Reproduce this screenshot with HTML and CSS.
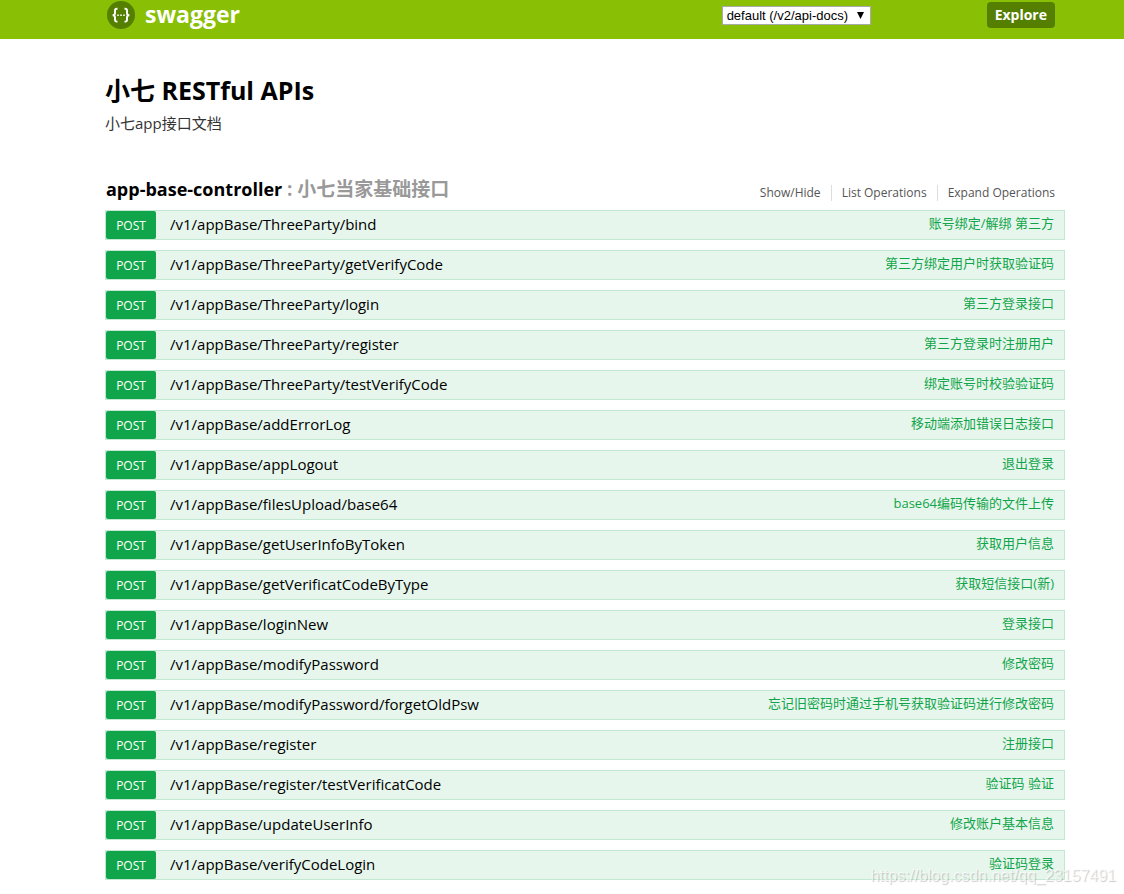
FILE: index.html
```html
<!DOCTYPE html>
<html lang="zh-CN">
<head>
    <meta charset="UTF-8">
    <meta name="viewport" content="width=device-width, initial-scale=1.0">
    <title>Swagger UI</title>
    <link rel="stylesheet" href="styles.css">
</head>
<body>
    <header class="header">
        <a href="#" class="logo">
            <svg class="logo-icon" viewBox="0 0 28 28" aria-hidden="true">
                <circle cx="14" cy="14" r="14" fill="#547f00"/>
                <path d="M10.500 7.800H9.800Q8 7.800 8 9.600V12Q8 14.200 5.600 14.200Q8 14.200 8 16.400V18.800Q8 20.600 9.800 20.600H10.500M17.500 7.800H18.200Q20 7.800 20 9.600V12Q20 14.200 22.400 14.200Q20 14.200 20 16.400V18.800Q20 20.600 18.200 20.600H17.500" fill="none" stroke="#fff" stroke-width="1.900"/>
                <path d="M10.200 13.400h1.600v1.600h-1.600zM13.200 13.400h1.600v1.600h-1.600zM16.200 13.400h1.600v1.600h-1.600z" fill="#fff"/>
            </svg>
            <span class="logo-title">swagger</span>
        </a>
        <form class="api-selector">
            <select class="api-select" aria-label="API docs">
                <option>default (/v2/api-docs)</option>
            </select>
            <button type="button" class="explore">Explore</button>
        </form>
    </header>

    <main class="container">
        <div class="info">
            <h1 class="info-title">小七 RESTful APIs</h1>
            <p class="info-description">小七app接口文档</p>
        </div>

        <section class="resource">
            <div class="heading">
                <h2 class="heading-title"><a href="#">app-base-controller</a> <span class="heading-note">: 小七当家基础接口</span></h2>
                <ul class="options">
                    <li><a href="#">Show/Hide</a></li>
                    <li><a href="#">List Operations</a></li>
                    <li><a href="#">Expand Operations</a></li>
                </ul>
            </div>

            <ul class="endpoints">
                <li class="operation"><a href="#" class="method">POST</a><a href="#" class="path">/v1/appBase/ThreeParty/bind</a><a href="#" class="summary">账号绑定/解绑 第三方</a></li>
                <li class="operation"><a href="#" class="method">POST</a><a href="#" class="path">/v1/appBase/ThreeParty/getVerifyCode</a><a href="#" class="summary">第三方绑定用户时获取验证码</a></li>
                <li class="operation"><a href="#" class="method">POST</a><a href="#" class="path">/v1/appBase/ThreeParty/login</a><a href="#" class="summary">第三方登录接口</a></li>
                <li class="operation"><a href="#" class="method">POST</a><a href="#" class="path">/v1/appBase/ThreeParty/register</a><a href="#" class="summary">第三方登录时注册用户</a></li>
                <li class="operation"><a href="#" class="method">POST</a><a href="#" class="path">/v1/appBase/ThreeParty/testVerifyCode</a><a href="#" class="summary">绑定账号时校验验证码</a></li>
                <li class="operation"><a href="#" class="method">POST</a><a href="#" class="path">/v1/appBase/addErrorLog</a><a href="#" class="summary">移动端添加错误日志接口</a></li>
                <li class="operation"><a href="#" class="method">POST</a><a href="#" class="path">/v1/appBase/appLogout</a><a href="#" class="summary">退出登录</a></li>
                <li class="operation"><a href="#" class="method">POST</a><a href="#" class="path">/v1/appBase/filesUpload/base64</a><a href="#" class="summary">base64编码传输的文件上传</a></li>
                <li class="operation"><a href="#" class="method">POST</a><a href="#" class="path">/v1/appBase/getUserInfoByToken</a><a href="#" class="summary">获取用户信息</a></li>
                <li class="operation"><a href="#" class="method">POST</a><a href="#" class="path">/v1/appBase/getVerificatCodeByType</a><a href="#" class="summary">获取短信接口(新)</a></li>
                <li class="operation"><a href="#" class="method">POST</a><a href="#" class="path">/v1/appBase/loginNew</a><a href="#" class="summary">登录接口</a></li>
                <li class="operation"><a href="#" class="method">POST</a><a href="#" class="path">/v1/appBase/modifyPassword</a><a href="#" class="summary">修改密码</a></li>
                <li class="operation"><a href="#" class="method">POST</a><a href="#" class="path">/v1/appBase/modifyPassword/forgetOldPsw</a><a href="#" class="summary">忘记旧密码时通过手机号获取验证码进行修改密码</a></li>
                <li class="operation"><a href="#" class="method">POST</a><a href="#" class="path">/v1/appBase/register</a><a href="#" class="summary">注册接口</a></li>
                <li class="operation"><a href="#" class="method">POST</a><a href="#" class="path">/v1/appBase/register/testVerificatCode</a><a href="#" class="summary">验证码 验证</a></li>
                <li class="operation"><a href="#" class="method">POST</a><a href="#" class="path">/v1/appBase/updateUserInfo</a><a href="#" class="summary">修改账户基本信息</a></li>
                <li class="operation"><a href="#" class="method">POST</a><a href="#" class="path">/v1/appBase/verifyCodeLogin</a><a href="#" class="summary">验证码登录</a></li>
            </ul>
        </section>
    </main>

    <div class="watermark">https://blog.csdn.net/qq_23157491</div>
</body>
</html>
```
FILE: styles.css
```css
* {
    box-sizing: border-box;
}
body {
    position: relative;
    margin: 0;
    padding-bottom: 14px;
    background: #fff;
    color: #000;
    font-family: "Droid Sans", "Open Sans", "Noto Sans CJK SC", sans-serif;
}
a {
    color: inherit;
    text-decoration: none;
}
ul {
    list-style: none;
    margin: 0;
    padding: 0;
}
.header {
    display: flex;
    justify-content: space-between;
    align-items: center;
    padding: 0 69px 9px 107px;
    background: #89bf04;
}
.logo {
    display: flex;
    align-items: center;
    gap: 10px;
    color: #fff;
}
.logo-icon {
    width: 28px;
    height: 28px;
}
.logo-title {
    padding-bottom: 2px;
    font-size: 23px;
    line-height: 28px;
    font-weight: bold;
}
.api-selector {
    display: flex;
    align-items: center;
    gap: 116px;
}
.api-select {
    appearance: none;
    height: 19px;
    padding: 0 21px 0 4px;
    border: 1px solid #a9a9a9;
    border-radius: 0;
    color: #000;
    background: #fff url("data:image/svg+xml,%3Csvg xmlns='http://www.w3.org/2000/svg' width='8' height='7'%3E%3Cpath d='M0 0h7L3.500 7z'/%3E%3C/svg%3E") no-repeat right 5px center;
    font-family: "Liberation Sans", Arial, sans-serif;
    font-size: 13px;
}
.explore {
    padding: 0 8px;
    border: none;
    border-radius: 4px;
    background: #547f00;
    color: #fff;
    font-family: inherit;
    font-size: 14px;
    font-weight: bold;
    line-height: 26px;
    cursor: pointer;
}
.container {
    padding: 0 59px 0 105px;
}
.info {
    padding-top: 33px;
}
.info-title {
    margin: 0;
    font-size: 25px;
    line-height: 36px;
}
.info-description {
    margin: 4px 0 0;
    color: #333;
    font-size: 15px;
    line-height: 22px;
}
.resource {
    padding-top: 40px;
}
.heading {
    display: flex;
    justify-content: space-between;
    align-items: center;
    padding: 0 10px 6px 1px;
}
.heading-title {
    margin: 0;
    font-size: 18px;
    line-height: 30px;
}
.heading-note {
    color: #999;
    font-size: 19px;
}
.options {
    display: flex;
    padding-top: 8px;
    color: #555;
    font-size: 12px;
    line-height: 16px;
}
.options li {
    padding: 0 10px;
    border-right: 1px solid #ddd;
}
.options li:last-child {
    padding-right: 0;
    border-right: none;
}
.endpoints {
    display: flex;
    flex-direction: column;
    gap: 10px;
}
.operation {
    display: flex;
    align-items: flex-start;
    padding-right: 10px;
    border: 1px solid #c3e8d1;
    background: #e7f6ec;
}
.method {
    width: 50px;
    padding-top: 2px;
    border-radius: 2px;
    background: #10a54a;
    color: #fff;
    font-size: 12px;
    line-height: 26px;
    text-align: center;
}
.path {
    padding-left: 14px;
    font-size: 15px;
    line-height: 26px;
}
.summary {
    margin-left: auto;
    color: #10a54a;
    font-size: 13px;
    line-height: 24px;
}
.watermark {
    position: absolute;
    right: 8px;
    bottom: 8px;
    color: rgba(255, 255, 255, 0.7);
    font-family: "Liberation Sans", Arial, sans-serif;
    font-size: 16px;
    line-height: 20px;
    text-shadow: 1px 1px 1px rgba(0, 0, 0, 0.2);
    pointer-events: none;
}
```
